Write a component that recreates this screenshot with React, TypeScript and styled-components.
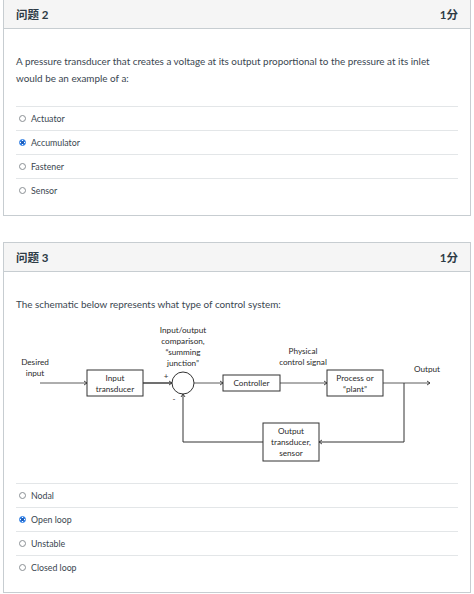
import React from "react";
import styled, { createGlobalStyle } from "styled-components";

const GlobalStyle = createGlobalStyle`
  body {
    margin: 0;
    background: #ffffff;
    font-family: Lato, "Noto Sans CJK SC", sans-serif;
    color: #2d3b45;
  }
`;

const Page = styled.div`
  padding: 0 3px 0 3px;
  margin-top: -1px;
  width: 468px;
`;

const Card = styled.div`
  border: 1px solid #c7cdd1;
  background: #fff;
  margin-bottom: 26px;
`;

const Header = styled.div`
  height: 28px;
  background: #f5f5f5;
  border-bottom: 1px solid #c7cdd1;
  display: flex;
  align-items: center;
  justify-content: space-between;
  padding: 0 12px 0 12px;
  font-size: 11.5px;
  font-weight: 700;
  color: #2d3b45;
`;

const Body = styled.div`
  padding: 24px 12px 13px 12px;
`;

const Question = styled.div<{ $gap?: number }>`
  font-size: 9.9px;
  line-height: 17px;
  color: #3a4650;
  margin-bottom: ${(p) => (p.$gap ?? 19)}px;
`;

const Options = styled.div`
  display: flex;
  flex-direction: column;
`;

const OptionRow = styled.div`
  height: 24px;
  border-top: 1px solid #e3e6e8;
  display: flex;
  align-items: center;
  gap: 5px;
  padding-left: 3px;
  padding-bottom: 1px;
  font-size: 8.8px;
  color: #3a4650;
  box-sizing: border-box;
`;

const Radio = styled.span<{ $checked?: boolean }>`
  width: 7px;
  height: 7px;
  border-radius: 50%;
  box-sizing: border-box;
  border: 1px solid ${(p) => (p.$checked ? "#2a7ae2" : "#8a8f94")};
  background: ${(p) =>
    p.$checked
      ? "radial-gradient(circle, #1c5bb8 0 1.4px, #ffffff 1.6px 2px, #3d8bf0 2.2px)"
      : "#fff"};
`;

const Diagram = styled.svg`
  display: block;
  margin: 6px 0 16px 0;
  font-family: Lato, "Liberation Sans", sans-serif;
`;

type Opt = { label: string; checked?: boolean };

const Option = ({ label, checked }: Opt) => (
  <OptionRow>
    <Radio $checked={checked} />
    <span>{label}</span>
  </OptionRow>
);

const Arrow = ({ x, y, dir }: { x: number; y: number; dir: "r" | "l" | "u" }) => {
  const pts =
    dir === "r"
      ? `${x - 3},${y - 2} ${x},${y} ${x - 3},${y + 2}`
      : dir === "l"
      ? `${x + 3},${y - 2} ${x},${y} ${x + 3},${y + 2}`
      : `${x - 2},${y + 3} ${x},${y} ${x + 2},${y + 3}`;
  return <polyline points={pts} fill="none" stroke="#333" strokeWidth={0.9} />;
};

const Label = ({ x, y, lines }: { x: number; y: number; lines: string[] }) => (
  <text x={x} y={y} textAnchor="middle" fontSize="8.2" fill="#2a2a2a">
    {lines.map((l, i) => (
      <tspan key={i} x={x} dy={i === 0 ? 0 : 11}>
        {l}
      </tspan>
    ))}
  </text>
);

const Schematic = () => (
  <Diagram width={444} height={148} viewBox="16 318 444 148">
    <g stroke="#333" fill="none">
      <line x1={40} y1={382} x2={87} y2={382} strokeWidth={0.8} />
      <rect x={87} y={369} width={56} height={26} strokeWidth={1} />
      <line x1={143} y1={382} x2={172} y2={382} strokeWidth={1.4} />
      <circle cx={183} cy={382} r={11} strokeWidth={1} />
      <line x1={194} y1={382} x2={223} y2={382} strokeWidth={0.8} />
      <rect x={223} y={374} width={57} height={16} strokeWidth={1} />
      <line x1={280} y1={382} x2={327} y2={382} strokeWidth={0.8} />
      <rect x={327} y={369} width={56} height={26} strokeWidth={1} />
      <line x1={383} y1={382} x2={430} y2={382} strokeWidth={0.8} />
      <polyline points="404,382 404,441 319,441" strokeWidth={1} />
      <rect x={263} y={422} width={56} height={38} strokeWidth={1} />
      <polyline points="263,441 183,441 183,393" strokeWidth={1} />
    </g>
    <Arrow x={87} y={382} dir="r" />
    <Arrow x={172} y={382} dir="r" />
    <Arrow x={223} y={382} dir="r" />
    <Arrow x={327} y={382} dir="r" />
    <Arrow x={430} y={382} dir="r" />
    <Arrow x={319} y={441} dir="l" />
    <Arrow x={183} y={393} dir="u" />
    <Label x={35} y={364} lines={["Desired", "input"]} />
    <Label x={115} y={380} lines={["Input", "transducer"]} />
    <Label x={251.5} y={385} lines={["Controller"]} />
    <Label x={355} y={380} lines={["Process or", "\u201Cplant\u201D"]} />
    <Label x={427} y={371} lines={["Output"]} />
    <Label x={291} y={433} lines={["Output", "transducer,", "sensor"]} />
    <Label x={303} y={353} lines={["Physical", "control signal"]} />
    <Label
      x={183}
      y={332}
      lines={["Input/output", "comparison,", "\u201Csumming", "junction\u201D"]}
    />
    <text x={166} y={378} fontSize="8" fill="#333" textAnchor="middle">
      +
    </text>
    <text x={174} y={401} fontSize="8" fill="#333" textAnchor="middle">
      -
    </text>
  </Diagram>
);

const App = () => (
  <>
    <GlobalStyle />
    <Page>
      <Card>
        <Header>
          <span>问题 2</span>
          <span>1分</span>
        </Header>
        <Body>
          <Question>
            A pressure transducer that creates a voltage at its output proportional to the
            pressure at its inlet would be an example of a:
          </Question>
          <Options>
            <Option label="Actuator" />
            <Option label="Accumulator" checked />
            <Option label="Fastener" />
            <Option label="Sensor" />
          </Options>
        </Body>
      </Card>
      <Card>
        <Header>
          <span>问题 3</span>
          <span>1分</span>
        </Header>
        <Body>
          <Question $gap={0}>
            The schematic below represents what type of control system:
          </Question>
          <Schematic />
          <Options>
            <Option label="Nodal" />
            <Option label="Open loop" checked />
            <Option label="Unstable" />
            <Option label="Closed loop" />
          </Options>
        </Body>
      </Card>
    </Page>
  </>
);

export default App;
